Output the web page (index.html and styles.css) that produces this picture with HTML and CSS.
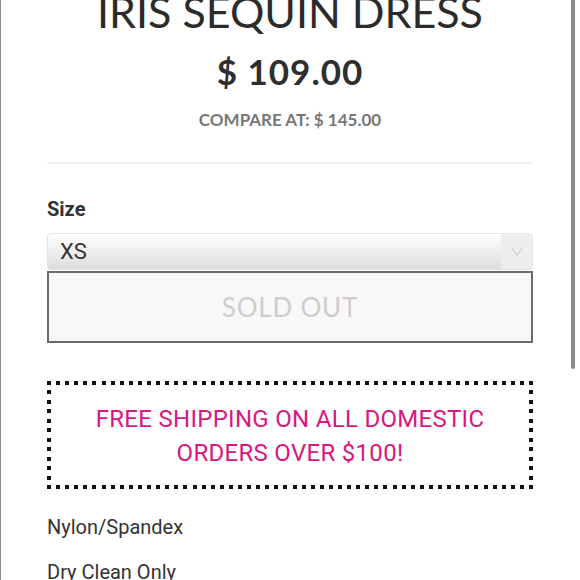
FILE: index.html
```html
<!DOCTYPE html>
<html lang="en">
<head>
<meta charset="utf-8">
<title>Iris Sequin Dress</title>
<link rel="stylesheet" href="styles.css">
</head>
<body>
<div class="page">
  <h1 class="title">IRIS SEQUIN DRESS</h1>
  <div class="price">$ 109.00</div>
  <div class="compare">COMPARE AT: $ 145.00</div>
  <hr class="divider">
  <div class="size-label">Size</div>
  <div class="select">
    <span class="select-value">XS</span>
    <span class="select-arrow">
      <svg width="12" height="9" viewBox="0 0 12 9"><path d="M0.8 1 L6 8 L11.2 1" fill="none" stroke="#c9c9c9" stroke-width="1.1"/></svg>
    </span>
  </div>
  <button class="soldout" type="button">SOLD OUT</button>
  <div class="promo">
    <p class="promo-text">FREE SHIPPING ON ALL DOMESTIC<br>ORDERS OVER $100!</p>
  </div>
  <p class="detail detail-first">Nylon/Spandex</p>
  <p class="detail">Dry Clean Only</p>
</div>
<div class="scrollbar"></div>
</body>
</html>
```
FILE: styles.css
```css
html, body {
  margin: 0;
  padding: 0;
  background: #fff;
  overflow: hidden;
}
body {
  height: 580px;
  border-left: 1px solid #8a8a8a;
  box-sizing: border-box;
  font-family: Roboto, "Noto Sans", sans-serif;
  color: #333;
}
.page {
  padding: 0 46px 0 46px;
  display: flex;
  flex-direction: column;
  width: 486px;
}
.title {
  margin: -11px 0 0;
  font-family: Lato, "Noto Sans", sans-serif;
  font-weight: 400;
  font-size: 43px;
  line-height: 46px;
  text-align: center;
  color: #2b2b2b;
}
.price {
  margin-top: 16px;
  font-family: Lato, "Noto Sans", sans-serif;
  font-weight: 700;
  font-size: 35px;
  line-height: 40px;
  letter-spacing: 1px;
  text-align: center;
  color: #2e2e2e;
}
.compare {
  margin-top: 17px;
  font-family: Lato, "Noto Sans", sans-serif;
  font-weight: 700;
  font-size: 17px;
  line-height: 24px;
  text-align: center;
  color: #777;
}
.divider {
  margin: 30px 0 0;
  border: 0;
  border-top: 2px solid #f0f0f0;
  height: 0;
}
.size-label {
  margin-top: 33px;
  font-weight: 700;
  font-size: 20px;
  line-height: 24px;
  color: #333;
}
.select {
  margin-top: 12px;
  height: 37px;
  box-sizing: border-box;
  border: 1px solid #e4e4e4;
  border-radius: 4px;
  background: linear-gradient(to bottom, #ffffff 0%, #f2f2f2 40%, #dcdcdc 100%);
  display: flex;
  align-items: center;
  overflow: hidden;
}
.select-value {
  flex: 1;
  padding-left: 12px;
  font-size: 22px;
  line-height: 26px;
  color: #333;
}
.select-arrow {
  width: 31px;
  align-self: stretch;
  background: #eeeeee;
  display: flex;
  align-items: center;
  justify-content: center;
}
.soldout {
  margin-top: 1px;
  height: 72px;
  box-sizing: border-box;
  border: 2px solid #6b6b6b;
  background: #f8f8f8;
  font-family: Lato, "Noto Sans", sans-serif;
  font-weight: 400;
  font-size: 26px;
  color: #cdcdcd;
  letter-spacing: 0.8px;
  padding: 0;
}
.promo {
  margin-top: 38px;
  height: 108px;
  box-sizing: border-box;
  padding: 21px 4px 11px;
  background-image:
    repeating-linear-gradient(to right, #111 0 4px, transparent 4px 9.094px),
    repeating-linear-gradient(to right, #111 0 4px, transparent 4px 9.094px),
    repeating-linear-gradient(to bottom, #111 0 4px, transparent 4px 9.4545px),
    repeating-linear-gradient(to bottom, #111 0 4px, transparent 4px 9.4545px);
  background-size: 100% 4px, 100% 4px, 4px 100%, 4px 100%;
  background-position: left top, left bottom, left top, right top;
  background-repeat: no-repeat;
}
.promo-text {
  margin: 0;
  text-align: center;
  font-size: 24px;
  line-height: 34px;
  letter-spacing: 0.3px;
  color: #d6197f;
}
.detail {
  margin: 21px 0 0;
  font-size: 20px;
  line-height: 24px;
  color: #333;
}
.detail-first {
  margin-top: 26px;
}
.scrollbar {
  position: absolute;
  left: 571px;
  top: 0;
  width: 4px;
  height: 369px;
  background: #8a8a8a;
  border-radius: 0 0 2px 2px;
}
```
